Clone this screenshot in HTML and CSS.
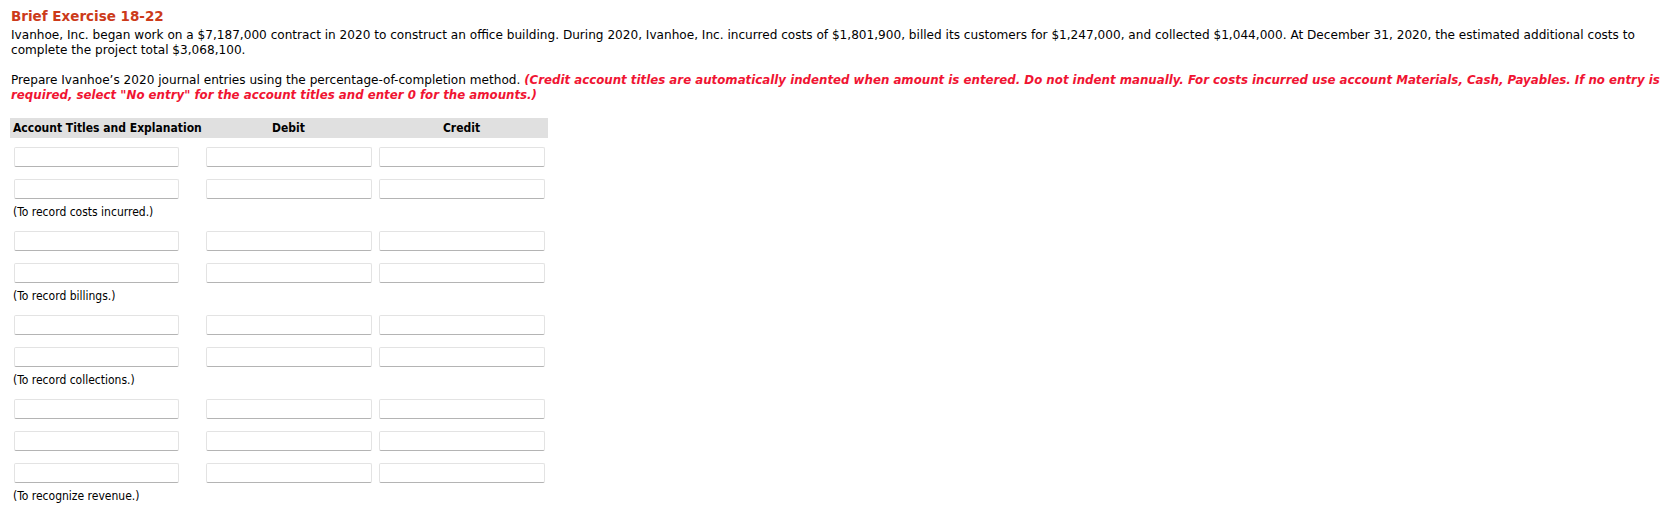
FILE: index.html
```html
<!DOCTYPE html>
<html lang="en">
<head>
  <meta charset="UTF-8" />
  <title>Brief Exercise 18-22</title>
  <link rel="stylesheet" href="styles.css">
</head>
<body>
  <div class="question">
    <h3 class="q-title">Brief Exercise 18-22</h3>
    <p class="q-text">Ivanhoe, Inc. began work on a $7,187,000 contract in 2020 to construct an office building. During 2020, Ivanhoe, Inc. incurred costs of $1,801,900, billed its customers for $1,247,000, and collected $1,044,000. At December 31, 2020, the estimated additional costs to complete the project total $3,068,100.</p>
    <p class="q-text">Prepare Ivanhoe’s 2020 journal entries using the percentage-of-completion method. <em class="note">(Credit account titles are automatically indented when amount is entered. Do not indent manually. For costs incurred use account Materials, Cash, Payables. If no entry is required, select "No entry" for the account titles and enter 0 for the amounts.)</em></p>

    <div class="journal">
      <div class="journal-head">
        <div class="col-title">Account Titles and Explanation</div>
        <div class="col-num">Debit</div>
        <div class="col-num">Credit</div>
      </div>

      <div class="entry">
        <div class="line"><input type="text"><input type="text"><input type="text"></div>
        <div class="line"><input type="text"><input type="text"><input type="text"></div>
        <div class="memo">(To record costs incurred.)</div>
      </div>

      <div class="entry">
        <div class="line"><input type="text"><input type="text"><input type="text"></div>
        <div class="line"><input type="text"><input type="text"><input type="text"></div>
        <div class="memo">(To record billings.)</div>
      </div>

      <div class="entry">
        <div class="line"><input type="text"><input type="text"><input type="text"></div>
        <div class="line"><input type="text"><input type="text"><input type="text"></div>
        <div class="memo">(To record collections.)</div>
      </div>

      <div class="entry">
        <div class="line"><input type="text"><input type="text"><input type="text"></div>
        <div class="line"><input type="text"><input type="text"><input type="text"></div>
        <div class="line"><input type="text"><input type="text"><input type="text"></div>
        <div class="memo">(To recognize revenue.)</div>
      </div>
    </div>
  </div>
</body>
</html>
```

FILE: styles.css
```css
* {
  box-sizing: border-box;
}

body {
  margin: 0;
  background: #ffffff;
  color: #000000;
  font-family: "DejaVu Sans", Verdana, sans-serif;
}

.question {
  padding: 8px 10px 0 11px;
}

.q-title {
  margin: 0 0 4px;
  font-size: 13.5px;
  line-height: 16px;
  font-weight: bold;
  color: #cc3a1a;
}

.q-text {
  margin: 0 0 15px;
  font-size: 12.1px;
  line-height: 15px;
}

.note {
  font-size: 11.8px;
  font-weight: bold;
  font-style: italic;
  color: #f01432;
}

.journal {
  width: 538px;
  margin-left: -1px;
  font-family: "DejaVu Sans Condensed", Tahoma, sans-serif;
}

.journal-head {
  display: grid;
  grid-template-columns: 192px 173px 173px;
  height: 20px;
  align-items: center;
  background: #e0e0e0;
  font-size: 12px;
  font-weight: bold;
  margin-bottom: 3px;
}

.col-title {
  padding-left: 3px;
}

.col-num {
  text-align: center;
}

.line {
  display: grid;
  grid-template-columns: 192px 173px 173px;
  padding: 6px 0;
}

.line input {
  display: block;
  width: 166px;
  height: 20px;
  margin: 0 0 0 4px;
  padding: 0 4px;
  border: 1px solid #e3e3e3;
  border-bottom-color: #b4b4b4;
  border-radius: 2px;
  background: #ffffff;
  font-size: 12px;
}

.line input:first-child {
  width: 165px;
}

.memo {
  padding-left: 3px;
  margin-bottom: 6px;
  font-size: 12px;
  line-height: 14px;
}
```
